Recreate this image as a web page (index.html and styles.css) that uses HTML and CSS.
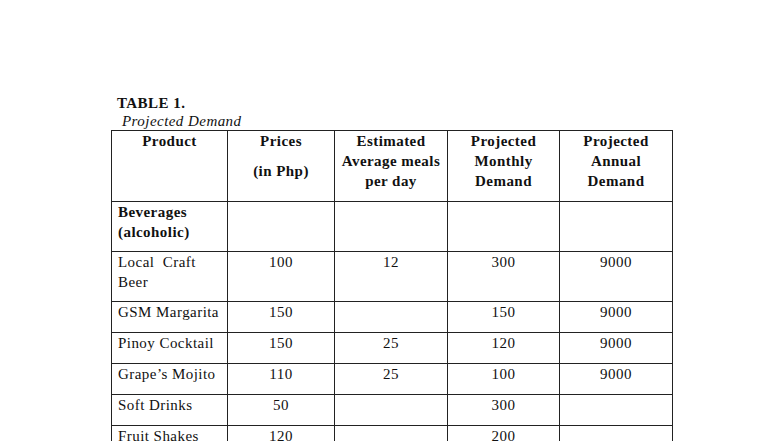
FILE: index.html
```html
<!DOCTYPE html>
<html>
<head>
<meta charset="utf-8">
<link rel="stylesheet" href="styles.css">
</head>
<body>
<div class="page">
  <div class="caption-title">TABLE 1.</div>
  <div class="caption-sub">Projected Demand</div>
  <table class="demand">
    <colgroup>
      <col class="c1"><col class="c2"><col class="c3"><col class="c4"><col class="c5">
    </colgroup>
    <tr class="head">
      <th>Product</th>
      <th><p>Prices</p><p class="gap">(in Php)</p></th>
      <th>Estimated Average meals per day</th>
      <th>Projected Monthly Demand</th>
      <th>Projected Annual Demand</th>
    </tr>
    <tr class="tall">
      <td class="prod bold">Beverages<br>(alcoholic)</td><td></td><td></td><td></td><td></td>
    </tr>
    <tr class="tall">
      <td class="prod">Local&nbsp; Craft<br>Beer</td><td>100</td><td>12</td><td>300</td><td>9000</td>
    </tr>
    <tr>
      <td class="prod">GSM Margarita</td><td>150</td><td></td><td>150</td><td>9000</td>
    </tr>
    <tr>
      <td class="prod">Pinoy Cocktail</td><td>150</td><td>25</td><td>120</td><td>9000</td>
    </tr>
    <tr>
      <td class="prod">Grape’s Mojito</td><td>110</td><td>25</td><td>100</td><td>9000</td>
    </tr>
    <tr>
      <td class="prod">Soft Drinks</td><td>50</td><td></td><td>300</td><td></td>
    </tr>
    <tr>
      <td class="prod">Fruit Shakes</td><td>120</td><td></td><td>200</td><td></td>
    </tr>
  </table>
</div>
</body>
</html>
```
FILE: styles.css
```css
html, body {
  margin: 0;
  padding: 0;
  background: #fff;
}
body {
  font-family: "Liberation Serif", "Times New Roman", serif;
  font-size: 15px;
  letter-spacing: 0.45px;
  color: #111;
}
.page {
  padding: 94px 0 0 111px;
}
.caption-title {
  font-weight: bold;
  padding-left: 6px;
  line-height: 19px;
}
.caption-sub {
  font-style: italic;
  padding-left: 11px;
  line-height: 17px;
}
.demand {
  border-collapse: collapse;
  width: 562px;
  table-layout: fixed;
}
.c1 { width: 116px; }
.c2 { width: 107px; }
.c3 { width: 113px; }
.c4 { width: 112px; }
.c5 { width: 113px; }
.demand th, .demand td {
  border: 1px solid #222;
  padding: 0 6px;
  line-height: 20px;
  vertical-align: top;
  text-align: center;
  font-weight: normal;
}
.demand th {
  font-weight: bold;
  height: 70px;
  padding-top: 0;
}
.demand th p {
  margin: 0;
}
.demand th p.gap {
  margin-top: 10px;
}
.demand td {
  height: 30px;
}
.demand tr.tall td {
  height: 49px;
}
.demand td.prod {
  text-align: left;
}
.demand td.bold {
  font-weight: bold;
}
```
